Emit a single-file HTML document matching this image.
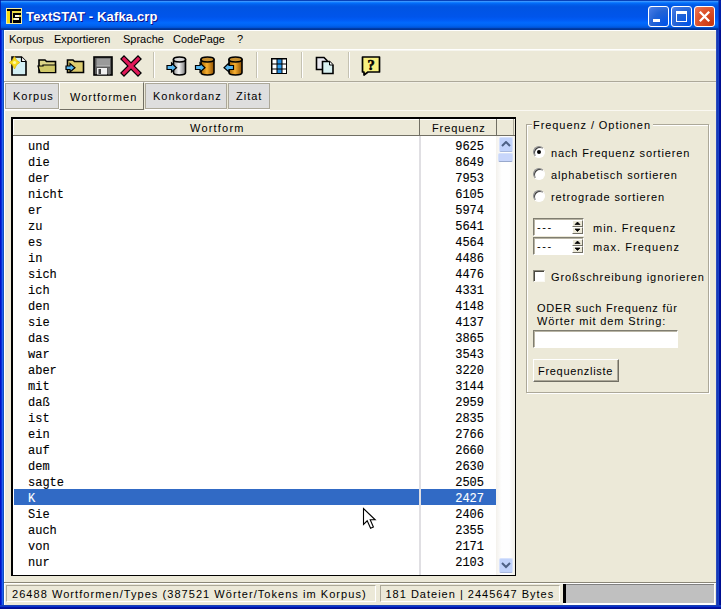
<!DOCTYPE html>
<html><head><meta charset="utf-8">
<style>
*{margin:0;padding:0;box-sizing:border-box}
html,body{width:721px;height:609px;overflow:hidden;background:#0054e3}
body{position:relative;font-family:"Liberation Sans",sans-serif;color:#000}
div{position:absolute}
#frame{left:0;top:0;width:721px;height:609px;background:#0054e3;
 box-shadow: inset -1px -1px #00138c, inset 1px 1px #0831d9, inset -2px -2px #001ea0, inset 2px 2px #166aee, inset -3px -3px #003bda, inset 3px 3px #0855dd;}
#title{left:0;top:0;width:721px;height:30px;
 background:linear-gradient(180deg,#0841b8 0%,#0841b8 3.3%,#3d95ff 3.4%,#3593ff 6%,#288eff 6%,#127dff 8%,#036ffc 10%,#0262ee 14%,#0057e5 20%,#0054e3 24%,#0055eb 56%,#005bf5 66%,#026afe 76%,#0062ef 86%,#0052d6 92%,#0040ab 94%,#003092 100%);}
#ttext{left:26px;top:9px;font-weight:bold;font-size:13px;letter-spacing:0.15px;color:#fff;text-shadow:1px 1px #0f1089;white-space:nowrap}
.tbtn{top:6px;width:21px;height:21px;border:1px solid #fff;border-radius:3px;
 background:radial-gradient(circle at 90% 90%,#0054e9 0%,#2263d5 55%,#4479e4 90%,#a3bbec 100%)}
#client{left:4px;top:30px;width:712px;height:575px;background:#ece9d8;border-left:1px solid #fff;border-top:1px solid #fff}
.menu{top:33px;font-size:11px;line-height:13px;white-space:nowrap}
.tsep{top:52px;width:2px;height:26px;border-left:1px solid #c5c2b2;border-right:1px solid #fff}
.tab{top:83px;height:26px;font-size:11px;letter-spacing:1px;white-space:nowrap;background:#dedede;border:1px solid #aca899;box-shadow:0 -1px #fff,0 1px #fff}
.tab span{position:absolute;top:6px}
.w{left:28px;-webkit-text-stroke:0.12px #000;font-family:"Liberation Mono",monospace;font-size:12px;line-height:20px;height:16px;white-space:nowrap}
.f{left:421px;width:63px;text-align:right;-webkit-text-stroke:0.12px #000;font-family:"Liberation Mono",monospace;font-size:12px;line-height:20px;height:16px}
.sel{height:16px;background:#316ac5}
.opt{font-size:11px;letter-spacing:0.87px;white-space:nowrap;line-height:15px}
.radio{width:12px;height:12px;border-radius:50%;background:#fff;border:1px solid;border-color:#8c8c8c #fff #fff #8c8c8c;box-shadow:inset 1px 1px #404040}
.sbtn{width:11px;height:7px;background:#ece9d8;border:1px solid;border-color:#fff #716f64 #716f64 #fff}
.spin{width:51px;height:18px;background:#fff;border:1px solid;border-color:#7f7d70 #fff #fff #7f7d70;box-shadow:inset 1px 1px #b8b4a4}
</style></head><body>
<div id="frame" style="background:#0054e3;box-shadow:none"></div>
<div style="left:0;top:0;width:1px;height:609px;background:#0010c8"></div>
<div style="left:1px;top:0;width:1px;height:609px;background:#0830d8"></div>
<div style="left:2px;top:0;width:1px;height:609px;background:#2060f0"></div>
<div style="left:3px;top:0;width:1px;height:609px;background:#1050c0"></div>
<div style="left:716px;top:0;width:1px;height:609px;background:#2a4cbc"></div>
<div style="left:717px;top:0;width:1px;height:609px;background:#1638b8"></div>
<div style="left:718px;top:0;width:1px;height:609px;background:#1844c4"></div>
<div style="left:719px;top:0;width:1px;height:609px;background:#0010a0"></div>
<div style="left:720px;top:0;width:1px;height:609px;background:#000e90"></div>
<div style="left:0;top:605px;width:721px;height:1px;background:#1a40b0"></div>
<div style="left:0;top:606px;width:721px;height:1px;background:#0a34cc"></div>
<div style="left:0;top:607px;width:721px;height:1px;background:#0012a8"></div>
<div style="left:0;top:608px;width:721px;height:1px;background:#000e90"></div>
<div id="title">
 <svg style="position:absolute;left:6px;top:8px" width="16" height="16" shape-rendering="crispEdges">
  <rect x="0" y="0" width="16" height="16" fill="#f4eca0"/>
  <rect x="1" y="1" width="14" height="14" fill="#e8d848"/>
  <rect x="1" y="3" width="3" height="12" fill="#f8dc10"/>
  <rect x="1" y="1" width="14" height="2" fill="#000"/>
  <rect x="4" y="3" width="2" height="12" fill="#000030"/>
  <rect x="7" y="5" width="8" height="10" fill="#000"/>
  <rect x="9" y="7" width="4" height="2" fill="#f8f4e0"/>
  <rect x="13" y="7" width="2" height="2" fill="#e8d848"/>
  <rect x="7" y="10" width="6" height="2" fill="#f8f4e0"/>
  <rect x="7" y="10" width="1" height="2" fill="#e8d848"/>
 </svg>
 <div id="ttext">TextSTAT - Kafka.crp</div>
 <div class="tbtn" style="left:648px"><div style="left:4px;top:12px;width:7px;height:3px;background:#fff"></div></div>
 <div class="tbtn" style="left:671px"><div style="left:4px;top:4px;width:11px;height:11px;border:1px solid #fff;border-top-width:3px"></div></div>
 <div class="tbtn" style="left:694px;background:radial-gradient(circle at 85% 85%,#c83810 0%,#dc5028 55%,#e87050 90%,#f0a090 100%)">
  <svg style="position:absolute;left:3px;top:3px" width="13" height="13"><path d="M1.8 1.8L11.2 11.2M11.2 1.8L1.8 11.2" stroke="#fff" stroke-width="2.3"/></svg></div>
</div>
<div style="left:0;top:0;width:1px;height:30px;background:#0018a8;opacity:.8"></div>
<div style="left:718px;top:0;width:1px;height:30px;background:#0038c0;opacity:.7"></div>
<div style="left:719px;top:0;width:2px;height:30px;background:#0018a0;opacity:.9"></div>
<div id="client"></div>
<!-- menu -->
<div class="menu" style="left:9px">Korpus</div>
<div class="menu" style="left:54px">Exportieren</div>
<div class="menu" style="left:123px">Sprache</div>
<div class="menu" style="left:173px">CodePage</div>
<div class="menu" style="left:237px">?</div>
<div style="left:4px;top:49px;width:712px;height:1px;background:#fff"></div>
<div style="left:4px;top:50px;width:712px;height:1px;background:#f6f5ee"></div>
<!-- toolbar -->
<svg style="position:absolute;left:0;top:0" width="400" height="82">
 <defs>
  <linearGradient id="silver" x1="0" x2="1"><stop offset="0" stop-color="#9a9a9a"/><stop offset="0.45" stop-color="#f4f4f4"/><stop offset="1" stop-color="#7a7a7a"/></linearGradient>
  <linearGradient id="gold" x1="0" x2="1"><stop offset="0" stop-color="#a06000"/><stop offset="0.45" stop-color="#f8b030"/><stop offset="1" stop-color="#905000"/></linearGradient>
  <linearGradient id="fold" x1="0" y1="0" x2="0" y2="1"><stop offset="0" stop-color="#f0e8a0"/><stop offset="1" stop-color="#c8b850"/></linearGradient>
 </defs>
 <!-- new doc -->
 <path d="M12 57H21.5L26 61.5V75H12Z" fill="#d4f0f4" stroke="#000" stroke-width="1.6"/>
 <path d="M21.5 57V61.5H26" fill="#fff" stroke="#000" stroke-width="1.2"/>
 <path d="M14.5 56.5L16.6 60.2L19.8 62.5L16.6 64.8L14.5 69L12.4 64.8L9.2 62.5L12.4 60.2Z" fill="#f8e020" stroke="#e0b000" stroke-width="0.7"/><circle cx="14.5" cy="62.5" r="1.6" fill="#fff8a0"/>
 <!-- open folder -->
 <path d="M39 72.5V60H45L46.5 61.5H55.5V72.5Z" fill="#dcd488" stroke="#000" stroke-width="1.6"/>
 <path d="M38 66H43V65H55.5V72.5H40Z" fill="#d0c868" stroke="#000" stroke-width="1.2"/>
 <!-- folder with arrow -->
 <path d="M67.5 72.5V60H73L74.5 61.5H83.5V72.5Z" fill="#dccc70" stroke="#000" stroke-width="1.6"/>
 <path d="M66 66H70V63.5L75 67.8L70 72V69.5H66Z" fill="#58b8f0" stroke="#000" stroke-width="1.2"/>
 <!-- floppy -->
 <rect x="94" y="57" width="18" height="18" fill="#5a5a5a" stroke="#000" stroke-width="1.6"/>
 <rect x="96.5" y="58.5" width="13.5" height="7.5" fill="#9a9a9a"/><rect x="96.5" y="65.5" width="13.5" height="1" fill="#c0c0c0"/>
 <rect x="97" y="68" width="10" height="6.5" fill="#f0f0f0"/>
 <rect x="98.5" y="69" width="2.5" height="5" fill="#404040"/>
 <rect x="108" y="68" width="2" height="6.5" fill="#707070"/>
 <!-- red x -->
 <path d="M124 59L138 73M138 59L124 73" stroke="#000" stroke-width="5.6" stroke-linecap="square"/>
 <path d="M124 59L138 73M138 59L124 73" stroke="#e01858" stroke-width="3.2" stroke-linecap="square"/>
 <!-- db silver -->
 <path d="M173.5 59.5V72.5A6 2.5 0 0 0 185.5 72.5V59.5Z" fill="url(#silver)" stroke="#000" stroke-width="1.6"/>
 <ellipse cx="179.5" cy="59.5" rx="6" ry="2.5" fill="#d8d8d8" stroke="#000" stroke-width="1.6"/>
 <path d="M167 65.5H171.5V63L176.5 67.8L171.5 72V69.5H167Z" fill="#58b8f0" stroke="#000" stroke-width="1.2"/>
 <!-- db gold 1 -->
 <path d="M201 59.5V72.5A6.5 2.5 0 0 0 214 72.5V59.5Z" fill="url(#gold)" stroke="#000" stroke-width="1.6"/>
 <ellipse cx="207.5" cy="59.5" rx="6.5" ry="2.5" fill="#c89030" stroke="#000" stroke-width="1.6"/>
 <path d="M195.5 65.5H200V63L205 67.8L200 72V69.5H195.5Z" fill="#58b8f0" stroke="#000" stroke-width="1.2"/>
 <!-- db gold 2 -->
 <path d="M229 59.5V72.5A6.5 2.5 0 0 0 242 72.5V59.5Z" fill="url(#gold)" stroke="#000" stroke-width="1.6"/>
 <ellipse cx="235.5" cy="59.5" rx="6.5" ry="2.5" fill="#c89030" stroke="#000" stroke-width="1.6"/>
 <path d="M233.5 65.5H229V63L224 67.8L229 72V69.5H233.5Z" fill="#58b8f0" stroke="#000" stroke-width="1.2"/>
 <!-- grid -->
 <rect x="271" y="58" width="16" height="16" fill="#000"/>
 <rect x="272.5" y="59.5" width="4" height="4" fill="#fff"/><rect x="277.5" y="59.5" width="4" height="4" fill="#2890e0"/><rect x="282.5" y="59.5" width="3.5" height="4" fill="#fff"/>
 <rect x="272.5" y="64.5" width="4" height="4" fill="#fff"/><rect x="277.5" y="64.5" width="4" height="4" fill="#30a0f0"/><rect x="282.5" y="64.5" width="3.5" height="4" fill="#fff"/>
 <rect x="272.5" y="69.5" width="4" height="3.5" fill="#fff"/><rect x="277.5" y="69.5" width="4" height="3.5" fill="#2890e0"/><rect x="282.5" y="69.5" width="3.5" height="3.5" fill="#fff"/>
 <!-- copy -->
 <path d="M316.5 57.5H324L327 60.5V69.5H316.5Z" fill="#e8e8f0" stroke="#000" stroke-width="1.6"/>
 <path d="M322.5 61.5H329.5L333 65V73.5H322.5Z" fill="#d8f0f0" stroke="#000" stroke-width="1.6"/>
 <path d="M329.5 61.5V65H333" fill="#fff" stroke="#000" stroke-width="1"/>
 <!-- help -->
 <path d="M362.5 57H379.5V72H368L364 75V72H362.5Z" fill="#f8f080" stroke="#000" stroke-width="1.7" stroke-linejoin="round"/>
 <text x="371" y="70.3" font-family="Liberation Serif" font-weight="bold" font-size="14.5" text-anchor="middle" stroke="#000" stroke-width="0.6">?</text>
</svg>

<div class="tsep" style="left:153px"></div>
<div class="tsep" style="left:256px"></div>
<div class="tsep" style="left:301px"></div>
<div class="tsep" style="left:348px"></div>
<div style="left:4px;top:81px;width:712px;height:1px;background:#aca899"></div>
<div style="left:4px;top:82px;width:712px;height:1px;background:#f2f0e6"></div>
<!-- tabs -->
<div style="left:4px;top:110px;width:712px;height:1px;background:#faf8f2"></div>
<div class="tab" style="left:5px;width:54px"><span style="left:7px">Korpus</span></div>
<div class="tab" style="left:59px;top:82px;height:28px;width:85px;background:#ece9d8;border-color:#fff #716f64 #716f64 #fff;box-shadow:none"><span style="left:10px;top:8px">Wortformen</span></div>
<div class="tab" style="left:145px;width:82px"><span style="left:7px">Konkordanz</span></div>
<div class="tab" style="left:228px;width:42px"><span style="left:7px">Zitat</span></div>
<!-- list -->
<div style="left:11px;top:117px;width:505px;height:459px;border:1px solid #000;border-width:2px 1px 1px 2px;background:#fff"></div>
<div style="left:13px;top:119px;width:502px;height:17px;background:#ece9d8;border-bottom:1px solid #716f64;box-shadow:inset 1px 1px #fff"></div>
<div style="left:513px;top:119px;width:1px;height:16px;background:#aca899"></div>
<div style="left:419px;top:119px;width:1px;height:16px;background:#716f64"></div>
<div style="left:496px;top:119px;width:1px;height:16px;background:#716f64"></div>
<div style="left:190px;top:121px;font-size:11px;letter-spacing:1.2px;line-height:15px">Wortform</div>
<div style="left:432px;top:121px;font-size:11px;letter-spacing:0.9px;line-height:15px">Frequenz</div>
<div style="left:419px;top:136px;width:2px;height:439px;background:#e0dfe3"></div>
<!-- scrollbar -->
<div style="left:496px;top:136px;width:19px;height:439px;background:linear-gradient(90deg,#f3f1ec,#fefefe 30%,#fefefe 70%,#f0efe9)"></div>
<div style="left:499px;top:137px;width:14px;height:15px;border-radius:2px;background:#c1d3fb;border:1px solid #d7e2fc;border-bottom-color:#a8b8dc"></div>
<svg style="position:absolute;left:501px;top:141px" width="10" height="7"><path d="M1 5L5 1L9 5" stroke="#4d6185" stroke-width="2" fill="none"/></svg>
<div style="left:498px;top:153px;width:15px;height:9px;border-radius:2px;background:#c8d6fb;border:1px solid #d4e0fa;border-bottom-color:#98a8cc"></div>
<div style="left:499px;top:558px;width:14px;height:15px;border-radius:2px;background:#c1d3fb;border:1px solid #d7e2fc;border-bottom-color:#a8b8dc"></div>
<svg style="position:absolute;left:501px;top:562px" width="10" height="7"><path d="M1 1L5 5L9 1" stroke="#4d6185" stroke-width="2" fill="none"/></svg>
<div class="w" style="top:137px">und</div><div class="f" style="top:137px">9625</div>
<div class="w" style="top:153px">die</div><div class="f" style="top:153px">8649</div>
<div class="w" style="top:169px">der</div><div class="f" style="top:169px">7953</div>
<div class="w" style="top:185px">nicht</div><div class="f" style="top:185px">6105</div>
<div class="w" style="top:201px">er</div><div class="f" style="top:201px">5974</div>
<div class="w" style="top:217px">zu</div><div class="f" style="top:217px">5641</div>
<div class="w" style="top:233px">es</div><div class="f" style="top:233px">4564</div>
<div class="w" style="top:249px">in</div><div class="f" style="top:249px">4486</div>
<div class="w" style="top:265px">sich</div><div class="f" style="top:265px">4476</div>
<div class="w" style="top:281px">ich</div><div class="f" style="top:281px">4331</div>
<div class="w" style="top:297px">den</div><div class="f" style="top:297px">4148</div>
<div class="w" style="top:313px">sie</div><div class="f" style="top:313px">4137</div>
<div class="w" style="top:329px">das</div><div class="f" style="top:329px">3865</div>
<div class="w" style="top:345px">war</div><div class="f" style="top:345px">3543</div>
<div class="w" style="top:361px">aber</div><div class="f" style="top:361px">3220</div>
<div class="w" style="top:377px">mit</div><div class="f" style="top:377px">3144</div>
<div class="w" style="top:393px">daß</div><div class="f" style="top:393px">2959</div>
<div class="w" style="top:409px">ist</div><div class="f" style="top:409px">2835</div>
<div class="w" style="top:425px">ein</div><div class="f" style="top:425px">2766</div>
<div class="w" style="top:441px">auf</div><div class="f" style="top:441px">2660</div>
<div class="w" style="top:457px">dem</div><div class="f" style="top:457px">2630</div>
<div class="w" style="top:473px">sagte</div><div class="f" style="top:473px">2505</div>
<div class="sel" style="top:489px;left:14px;width:405px"></div><div class="sel" style="top:489px;left:421px;width:75px"></div>
<div class="w" style="top:489px;color:#fff;-webkit-text-stroke-color:#fff">K</div><div class="f" style="top:489px;color:#fff;-webkit-text-stroke-color:#fff">2427</div>
<div class="w" style="top:505px">Sie</div><div class="f" style="top:505px">2406</div>
<div class="w" style="top:521px">auch</div><div class="f" style="top:521px">2355</div>
<div class="w" style="top:537px">von</div><div class="f" style="top:537px">2171</div>
<div class="w" style="top:553px">nur</div><div class="f" style="top:553px">2103</div>
<svg style="position:absolute;left:0;top:0" width="400" height="540">
 <path d="M363.5 508.5V524.5L367.2 520.8L370.6 528.2L373.4 527L370.2 519.8H375.2Z" fill="#fff" stroke="#000" stroke-width="1.1" stroke-linejoin="miter"/>
</svg>
<!-- right panel -->
<div style="left:526px;top:124px;width:183px;height:269px;border:1px solid #aca899;box-shadow:1px 1px #fff, inset 1px 1px #fff"></div>
<div class="opt" style="left:532px;top:118px;background:#ece9d8;padding:0 2px 0 1px;letter-spacing:0.93px">Frequenz / Optionen</div>
<div class="radio" style="left:533px;top:146px"><div style="left:3px;top:3px;width:4px;height:4px;border-radius:50%;background:#000"></div></div>
<div class="radio" style="left:533px;top:168px"></div>
<div class="radio" style="left:533px;top:190px"></div>
<div class="opt" style="left:551px;top:146px">nach Frequenz sortieren</div>
<div class="opt" style="left:551px;top:168px">alphabetisch sortieren</div>
<div class="opt" style="left:551px;top:190px">retrograde sortieren</div>
<div class="spin" style="left:533px;top:218px"></div>
<div class="spin" style="left:533px;top:237px"></div>
<div class="sbtn" style="left:572px;top:220px"></div><div class="sbtn" style="left:572px;top:227px"></div>
<div class="sbtn" style="left:572px;top:239px"></div><div class="sbtn" style="left:572px;top:246px"></div>
<svg style="position:absolute;left:0;top:0" width="600" height="260">
 <path d="M575 224.5H580L577.5 222Z M575 229H580L577.5 231.5Z M575 243.5H580L577.5 241Z M575 248H580L577.5 250.5Z" fill="#000" stroke="#000" stroke-width="0.7"/>
</svg>
<div class="opt" style="left:537px;top:220px;letter-spacing:1.6px">---</div>
<div class="opt" style="left:537px;top:239px;letter-spacing:1.6px">---</div>
<div class="opt" style="left:593px;top:221px;letter-spacing:1.0px">min. Frequenz</div>
<div class="opt" style="left:593px;top:240px;letter-spacing:1.05px">max. Frequenz</div>
<div style="left:533px;top:270px;width:12px;height:12px;background:#fff;border:1px solid;border-color:#8c8a7c #fbfaf4 #fbfaf4 #8c8a7c;box-shadow:inset 1px 1px #4a4840"></div>
<div class="opt" style="left:551px;top:270px;letter-spacing:0.92px">Großschreibung ignorieren</div>
<div class="opt" style="left:537px;top:301px;letter-spacing:0.78px">ODER such Frequenz für</div>
<div class="opt" style="left:537px;top:314px">Wörter mit dem String:</div>
<div style="left:533px;top:330px;width:145px;height:18px;background:#fff;border:1px solid;border-color:#7f7d70 #fff #fff #7f7d70;box-shadow:inset 1px 1px #b8b4a4"></div>
<div style="left:533px;top:359px;width:86px;height:23px;background:#ece9d8;border:1px solid;border-color:#fff #716f64 #716f64 #fff;box-shadow:inset -1px -1px #aca899"></div>
<div class="opt" style="left:538px;top:364px;letter-spacing:0.7px">Frequenzliste</div>
<!-- status bar -->
<div style="left:4px;top:582px;width:712px;height:1px;background:#8a8677"></div>
<div style="left:4px;top:583px;width:712px;height:1px;background:#fff"></div>
<div style="left:6px;top:585px;width:370px;height:17px;border:1px solid;border-color:#aca899 #fff #fff #aca899"></div>
<div class="opt" style="left:12px;top:587px;letter-spacing:1.05px">26488 Wortformen/Types (387521 Wörter/Tokens im Korpus)</div>
<div style="left:380px;top:585px;width:180px;height:17px;border:1px solid;border-color:#aca899 #fff #fff #aca899"></div>
<div class="opt" style="left:385.5px;top:587px;letter-spacing:1.0px">181 Dateien | 2445647 Bytes</div>
<div style="left:563px;top:584px;width:152px;height:21px;background:#fff"></div>
<div style="left:563px;top:584px;width:151px;height:19px;background:#c0c0c0;border-top:1px solid #808080"></div>
<div style="left:563px;top:584px;width:3px;height:19px;background:#000"></div>
</body></html>
